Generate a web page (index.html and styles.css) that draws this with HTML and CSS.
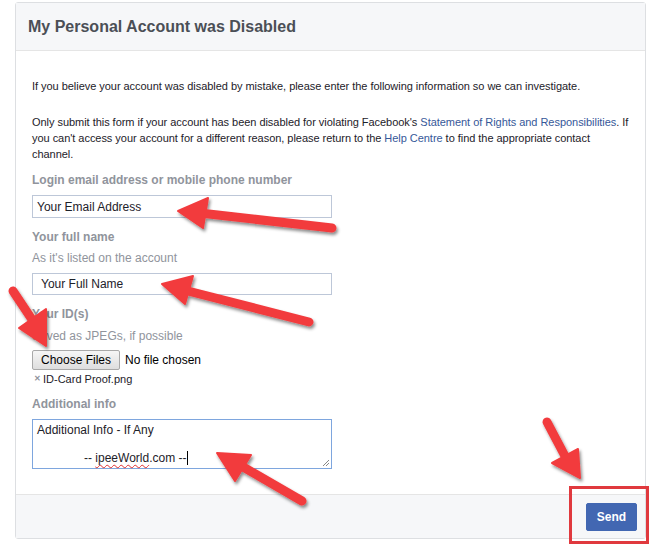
FILE: index.html
```html
<!DOCTYPE html>
<html>
<head>
<meta charset="utf-8">
<link rel="stylesheet" href="styles.css">
</head>
<body>
<div class="page">
  <div class="card">
    <div class="header"><h2 class="title">My Personal Account was Disabled</h2></div>
    <div class="body">
      <p class="p1">If you believe your account was disabled by mistake, please enter the following information so we can investigate.</p>
      <p class="p2">Only submit this form if your account has been disabled for violating Facebook's <a class="link">Statement of Rights and Responsibilities</a>. If you can't access your account for a different reason, please return to the <a class="link">Help Centre</a> to find the appropriate contact channel.</p>
      <div class="label l-email">Login email address or mobile phone number</div>
      <div class="input i-email">Your Email Address</div>
      <div class="label l-name">Your full name</div>
      <div class="help h-name">As it's listed on the account</div>
      <div class="input i-name">Your Full Name</div>
      <div class="label l-id">Your ID(s)</div>
      <div class="help h-id">Saved as JPEGs, if possible</div>
      <div class="filerow">
        <span class="filebtn">Choose Files</span>
        <span class="nofile">No file chosen</span>
      </div>
      <div class="fileitem"><span class="x">✕</span>ID-Card Proof.png</div>
      <div class="label l-info">Additional info</div>
      <div class="textarea"><div class="tline">Additional Info - If Any</div><div class="tline">&nbsp;</div><div class="tline indent">-- <span class="spell">ipeeWorld</span>.com --<span class="caret"></span></div><svg class="grip" width="8" height="8" viewBox="0 0 8 8"><path d="M7 1L1 7M7 4L4 7" stroke="#888" stroke-width="1"/></svg></div>
    </div>
    <div class="footer"><span class="send">Send</span></div>
  </div>
  <div class="highlight"></div>
  <svg class="arrows" width="654" height="551" viewBox="0 0 654 551">
    <defs>
      <filter id="sh" x="-20%" y="-20%" width="140%" height="140%">
        <feDropShadow dx="1.5" dy="2.5" stdDeviation="1.8" flood-color="#000" flood-opacity="0.45"/>
      </filter>
    </defs>
    <g filter="url(#sh)" fill="#f23b3e" stroke="#f23b3e" stroke-linejoin="round">
      <line x1="332" y1="228" x2="200" y2="213" stroke-width="9" stroke-linecap="round"/>
      <polygon points="178,211 208,198 203,228" stroke-width="2"/>
      <line x1="309" y1="322" x2="184" y2="290" stroke-width="9" stroke-linecap="round"/>
      <polygon points="162,284 193,276 185,304" stroke-width="2"/>
      <line x1="13" y1="291" x2="33" y2="321" stroke-width="9" stroke-linecap="round"/>
      <polygon points="46,346 19,328 46,309" stroke-width="2"/>
      <line x1="302" y1="501" x2="238" y2="464" stroke-width="9" stroke-linecap="round"/>
      <polygon points="217,453 251,455 235,481" stroke-width="2"/>
      <line x1="547" y1="422" x2="566" y2="458" stroke-width="9" stroke-linecap="round"/>
      <polygon points="580,478 552,463 578,449" stroke-width="2"/>
    </g>
  </svg>
</div>
</body>
</html>
```
FILE: styles.css
```css
* { box-sizing: border-box; }
html, body { margin: 0; padding: 0; background: #fff; }
body { font-family: "Liberation Sans", Arial, sans-serif; color: #1d2129; }
.page { position: relative; width: 654px; height: 551px; padding: 2px 0 0 15px; overflow: hidden; }
.card { width: 631px; border: 1px solid #dddfe2; border-radius: 3px; background: #fff; }
.header { height: 48px; background: #f6f7f9; border-bottom: 1px solid #e5e5e5; padding: 0 12px; display: flex; align-items: center; }
.title { margin: 0; font-size: 16px; font-weight: bold; color: #4b4f56; line-height: 20px; }
.body { padding: 27px 8px 25px 16px; font-size: 11px; }
.p1, .p2 { margin: 0; line-height: 16px; font-size: 11px; color: #1d2129; letter-spacing: -0.04px; }
.p2 { margin-top: 20px; max-width: 598px; }
.link { color: #365899; text-decoration: none; }
.label { font-size: 12px; font-weight: bold; color: #90949c; line-height: 16px; }
.help { font-size: 12px; color: #90949c; line-height: 16px; }
.l-email { margin-top: 10px; }
.input { width: 300px; border: 1px solid #bdc7d8; font-size: 12px; color: #1d2129; padding: 0 4px; display: flex; align-items: center; background: #fff; }
.i-email { height: 23px; margin-top: 7px; }
.l-name { margin-top: 11px; }
.h-name { margin-top: 5px; }
.i-name { height: 22px; margin-top: 7px; padding-left: 8px; }
.l-id { margin-top: 11px; }
.h-id { margin-top: 6px; }
.filerow { margin-top: 6px; display: flex; align-items: center; gap: 5px; height: 20px; }
.filebtn { height: 20px; width: 88px; border: 1px solid #a9a9a9; border-radius: 2px; background: linear-gradient(#f6f6f6, #dedede); font-size: 12px; color: #000; display: flex; align-items: center; justify-content: center; }
.nofile { font-size: 12px; color: #000; }
.fileitem { margin-top: 2px; font-size: 11px; line-height: 14px; color: #1d2129; display: flex; align-items: center; padding-left: 2px; }
.x { font-size: 8px; color: #90949c; margin-right: 2px; font-weight: bold; }
.l-info { margin-top: 10px; }
.textarea { position: relative; width: 300px; height: 50px; margin-top: 7px; border: 1px solid #7ea6de; padding: 3px 4px; font-size: 12px; line-height: 14px; color: #1d2129; white-space: pre; }
.indent { padding-left: 47px; }
.spell { text-decoration: underline wavy #e03030; text-decoration-thickness: 1px; text-underline-offset: 2px; }
.caret { display: inline-block; width: 1px; height: 14px; background: #000; vertical-align: -3px; margin-left: 1px; }
.grip { position: absolute; right: 1px; bottom: 1px; }
.footer { height: 44px; background: #f6f7f9; border-top: 1px solid #e5e5e5; display: flex; align-items: flex-start; justify-content: flex-end; padding: 8px 8px 0 0; }
.send { height: 28px; width: 51px; background: #4267b2; border: 1px solid #4267b2; border-radius: 2px; color: #fff; font-weight: bold; font-size: 12px; display: flex; align-items: center; justify-content: center; }
.highlight { position: absolute; left: 569px; top: 486px; width: 80px; height: 58px; border: 3px solid #e0393e; }
.arrows { position: absolute; left: 0; top: 0; pointer-events: none; }
```
